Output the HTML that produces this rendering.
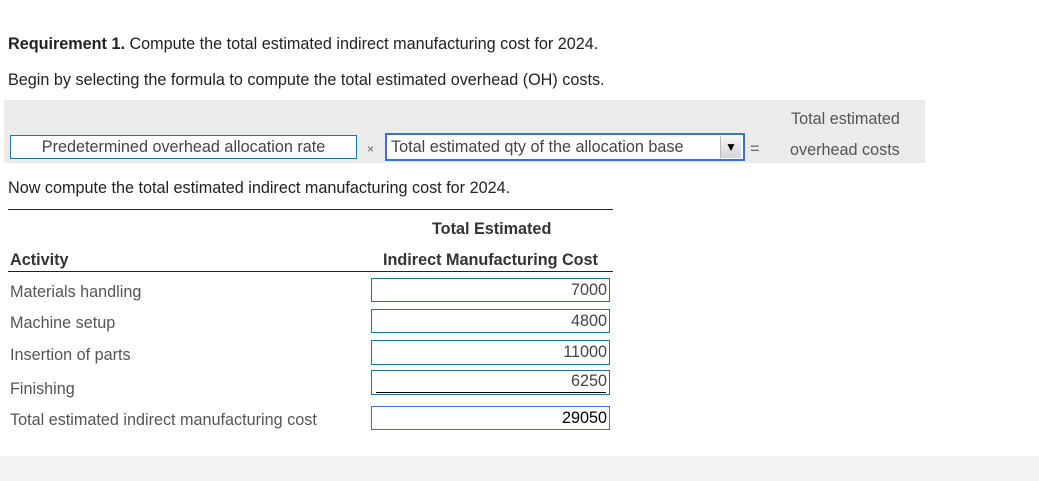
<!DOCTYPE html>
<html><head><meta charset="utf-8"><style>
body{margin:0;width:1039px;height:481px;background:#fff;font-family:"Liberation Sans",Arial,sans-serif;font-size:16.2px;color:#222;position:relative;overflow:hidden}
.a{position:absolute;white-space:nowrap}
.box{position:absolute;box-sizing:border-box;border:1px solid #1a7a96;background:#fff;text-align:right;padding-right:2px;font-size:16.2px;line-height:22px;color:#444}
.c{color:#555}
</style></head><body>
<div class="a" style="left:8px;top:35px"><b>Requirement 1.</b> Compute the total estimated indirect manufacturing cost for 2024.</div>
<div class="a" style="left:8px;top:71px">Begin by selecting the formula to compute the total estimated overhead (OH) costs.</div>
<div class="a" style="left:4px;top:100px;width:921px;height:63px;background:#ebebeb"></div>
<div class="a" style="left:10px;top:135px;width:347px;height:24px;box-sizing:border-box;border:1px solid #1a7a96;background:#fff;text-align:center;line-height:22px;color:#444">Predetermined overhead allocation rate</div>
<div class="a" style="left:367px;top:142px;font-size:12px;color:#666">×</div>
<div class="a" style="left:385px;top:133px;width:360px;height:28px;box-sizing:border-box;border:2px solid #3a6fd6;background:#fff;line-height:24px;padding-left:4px;color:#444">Total estimated qty of the allocation base
<div style="position:absolute;right:2px;top:1px;width:20px;height:22px;background:linear-gradient(#f6f6f6,#d4d4d4);border-left:1px solid #bbb;text-align:center;line-height:22px;font-size:12px;color:#000">▼</div></div>
<div class="a" style="left:750px;top:140px;color:#666">=</div>
<div class="a c" style="left:791px;top:110px">Total estimated</div>
<div class="a c" style="left:790px;top:141px">overhead costs</div>
<div class="a" style="left:8px;top:179px">Now compute the total estimated indirect manufacturing cost for 2024.</div>
<div class="a" style="left:8px;top:209px;width:605px;height:1px;background:#222"></div>
<div class="a" style="left:432px;top:220px;font-weight:bold;color:#333">Total Estimated</div>
<div class="a" style="left:10px;top:251px;font-weight:bold;color:#333">Activity</div>
<div class="a" style="left:383px;top:251px;font-weight:bold;color:#333">Indirect Manufacturing Cost</div>
<div class="a" style="left:8px;top:271px;width:605px;height:1px;background:#222"></div>
<div class="a c" style="left:10px;top:283px">Materials handling</div>
<div class="a c" style="left:10px;top:314px">Machine setup</div>
<div class="a c" style="left:10px;top:346px">Insertion of parts</div>
<div class="a c" style="left:10px;top:380px">Finishing</div>
<div class="a c" style="left:10px;top:411px">Total estimated indirect manufacturing cost</div>
<div class="box" style="left:371px;top:278px;width:239px;height:24px">7000</div>
<div class="box" style="left:371px;top:309px;width:239px;height:24px">4800</div>
<div class="box" style="left:371px;top:340px;width:239px;height:25px">11000</div>
<div class="box" style="left:371px;top:370px;width:239px;height:25px;line-height:20px">6250<div style="position:absolute;left:4px;right:3px;top:21px;height:1px;background:#000"></div></div>
<div class="box" style="left:371px;top:406px;width:239px;height:24px;border-color:#3a6fd6;color:#000">29050</div>
<div class="a" style="left:0;top:456px;width:1039px;height:25px;background:#f2f2f2"></div>
</body></html>
